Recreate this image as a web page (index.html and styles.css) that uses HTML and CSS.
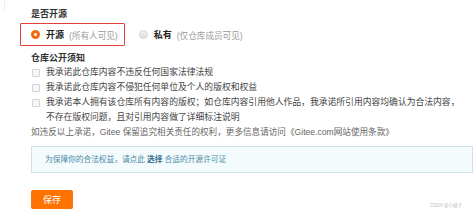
FILE: index.html
```html
<!DOCTYPE html>
<html lang="zh-CN">
<head>
    <meta charset="UTF-8">
    <title>仓库设置</title>
    <link rel="stylesheet" href="styles.css">
</head>
<body>
    <div class="edge"></div>
    <main class="form">
        <div class="field-title">是否开源</div>
        <div class="radio-group">
            <label class="radio-option selected">
                <span class="radio checked"></span>
                <b>开源</b>
                <span class="hint">(所有人可见)</span>
            </label>
            <label class="radio-option">
                <span class="radio"></span>
                <b>私有</b>
                <span class="hint">(仅仓库成员可见)</span>
            </label>
        </div>

        <div class="field-title">仓库公开须知</div>
        <div class="check-list">
            <label class="check-row">
                <span class="checkbox"></span>
                <span class="check-text">我承诺此仓库内容不违反任何国家法律法规</span>
            </label>
            <label class="check-row">
                <span class="checkbox"></span>
                <span class="check-text">我承诺此仓库内容不侵犯任何单位及个人的版权和权益</span>
            </label>
            <label class="check-row">
                <span class="checkbox"></span>
                <span class="check-text">我承诺本人拥有该仓库所有内容的版权；如仓库内容引用他人作品，我承诺所引用内容均确认为合法内容，不存在版权问题，且对引用内容做了详细标注说明</span>
            </label>
        </div>
        <p class="terms">如违反以上承诺，Gitee 保留追究相关责任的权利，更多信息请访问《Gitee.com网站使用条款》</p>

        <div class="notice">为保障你的合法权益，请点此 <b>选择</b> 合适的开源许可证</div>

        <button class="save-button">保存</button>
    </main>
    <div class="watermark">CSDN @小橙子</div>
</body>
</html>
```

FILE: styles.css
```css
* {
    margin: 0;
    padding: 0;
    box-sizing: border-box;
}

body {
    background: #fff;
    color: #333;
    font-family: "Liberation Sans", "Noto Sans CJK SC", sans-serif;
    font-size: 8.8px;
    width: 474px;
    height: 214px;
    overflow: hidden;
    position: relative;
}

.edge {
    position: absolute;
    left: 4px;
    top: 0;
    width: 1px;
    height: 12px;
    background: #eee;
}

.form {
    padding: 7px 1px 0 31px;
}

.field-title {
    font-weight: bold;
    font-size: 9px;
    line-height: 14px;
    color: #333;
}

.radio-group {
    display: flex;
    align-items: center;
    height: 23px;
    margin: 2px 0 5px -11px;
}

.radio-option {
    display: flex;
    align-items: center;
    height: 23px;
    padding: 0 6px 0 10px;
    border: 1.5px solid transparent;
    font-size: 9px;
}

.radio-option.selected {
    border-color: #e5413c;
    border-radius: 1px;
    margin-right: 3px;
}

.radio-option b {
    margin-left: 6px;
    color: #222;
}

.radio {
    width: 9px;
    height: 9px;
    border-radius: 50%;
    background: linear-gradient(#f4f4f4, #dcdcdc);
    border: 1px solid #d6d6d6;
}

.radio.checked {
    background: #fff;
    border: 3px solid #f26a10;
}

.hint {
    color: #999;
    margin-left: 5px;
    font-size: 8.6px;
}

.check-row {
    display: flex;
    align-items: flex-start;
    line-height: 15px;
    color: #444;
}

.check-text {
    max-width: 414px;
}

.checkbox {
    flex: none;
    width: 8px;
    height: 8px;
    margin: 3.5px 6px 0 1px;
    border: 1px solid #d4d4d4;
    border-radius: 1px;
    background: #f7f7f7;
}

.terms {
    font-size: 8.6px;
    line-height: 14px;
    color: #666;
}

.notice {
    margin-top: 7px;
    height: 27px;
    line-height: 25px;
    padding-left: 13px;
    background: #f3fbfd;
    border: 1px solid #cfe4ea;
    color: #4f8aa8;
    font-size: 7.7px;
}

.notice b {
    color: #2e6a8e;
}

.save-button {
    display: block;
    margin-top: 17px;
    width: 42px;
    height: 19px;
    border: none;
    border-radius: 2px;
    background: #fe7300;
    color: #fff;
    font-family: inherit;
    font-size: 9px;
}

.watermark {
    position: absolute;
    right: 12px;
    bottom: 6px;
    font-size: 4.5px;
    color: #bbb;
}
```
